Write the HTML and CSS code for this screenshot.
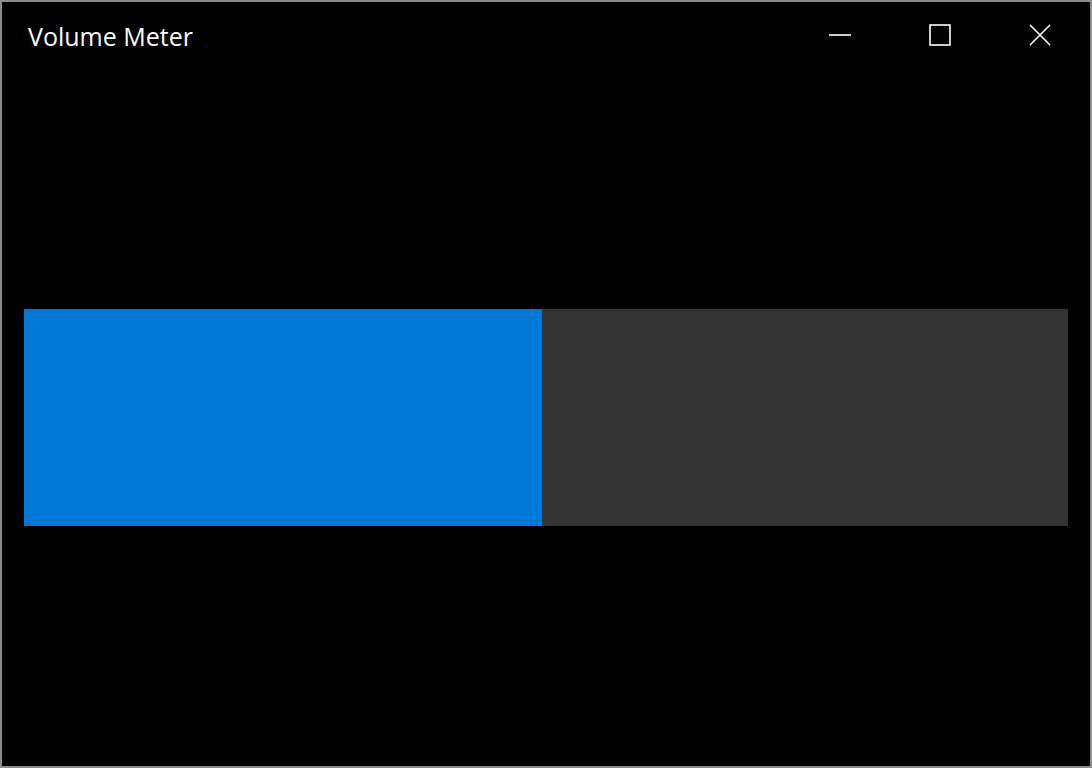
FILE: index.html
```html
<!DOCTYPE html>
<html lang="en">
  <head>
    <meta charset="UTF-8" />
    <meta name="viewport" content="width=device-width, initial-scale=1.0" />
    <title>Volume Meter</title>
    <link rel="stylesheet" href="styles.css">
  </head>
  <body>
    <div class="window">
      <div class="titlebar">
        <span class="title">Volume Meter</span>
        <div class="controls">
          <button class="ctl" aria-label="Minimize">
            <svg width="22" height="22" viewBox="0 0 22 22"><line x1="0" y1="11" x2="22" y2="11" stroke="#fff" stroke-width="1.6"/></svg>
          </button>
          <button class="ctl" aria-label="Maximize">
            <svg width="22" height="22" viewBox="0 0 22 22"><rect x="1" y="1" width="20" height="20" fill="none" stroke="#fff" stroke-width="1.6"/></svg>
          </button>
          <button class="ctl" aria-label="Close">
            <svg width="22" height="22" viewBox="0 0 22 22"><path d="M1 1 L21 21 M21 1 L1 21" stroke="#fff" stroke-width="1.6"/></svg>
          </button>
        </div>
      </div>

      <div class="content">
        <div class="meter">
          <div class="level" style="width: 49.6%"></div>
        </div>
      </div>
    </div>
  </body>
</html>
```

FILE: styles.css
```css
html,
body {
  margin: 0;
  padding: 0;
  background: #000;
}

.window {
  box-sizing: border-box;
  width: 1092px;
  height: 768px;
  border: 2px solid #8c8c8c;
  background: #000;
  display: flex;
  flex-direction: column;
  font-family: "Open Sans", "Noto Sans", Arial, sans-serif;
  color: #fff;
}

.titlebar {
  height: 67px;
  display: flex;
  justify-content: space-between;
  align-items: flex-start;
}

.title {
  font-size: 25px;
  line-height: 34px;
  margin-left: 26px;
  margin-top: 17px;
}

.controls {
  display: flex;
}

.ctl {
  width: 100px;
  height: 65px;
  background: transparent;
  border: none;
  padding: 0;
  display: flex;
  align-items: center;
  justify-content: center;
  cursor: pointer;
}

.content {
  flex: 1;
  display: flex;
  align-items: center;
  padding: 0 22px;
}

.meter {
  width: 100%;
  height: 217px;
  background: #333333;
  display: flex;
}

.level {
  height: 100%;
  background: #0078d7;
}
```
